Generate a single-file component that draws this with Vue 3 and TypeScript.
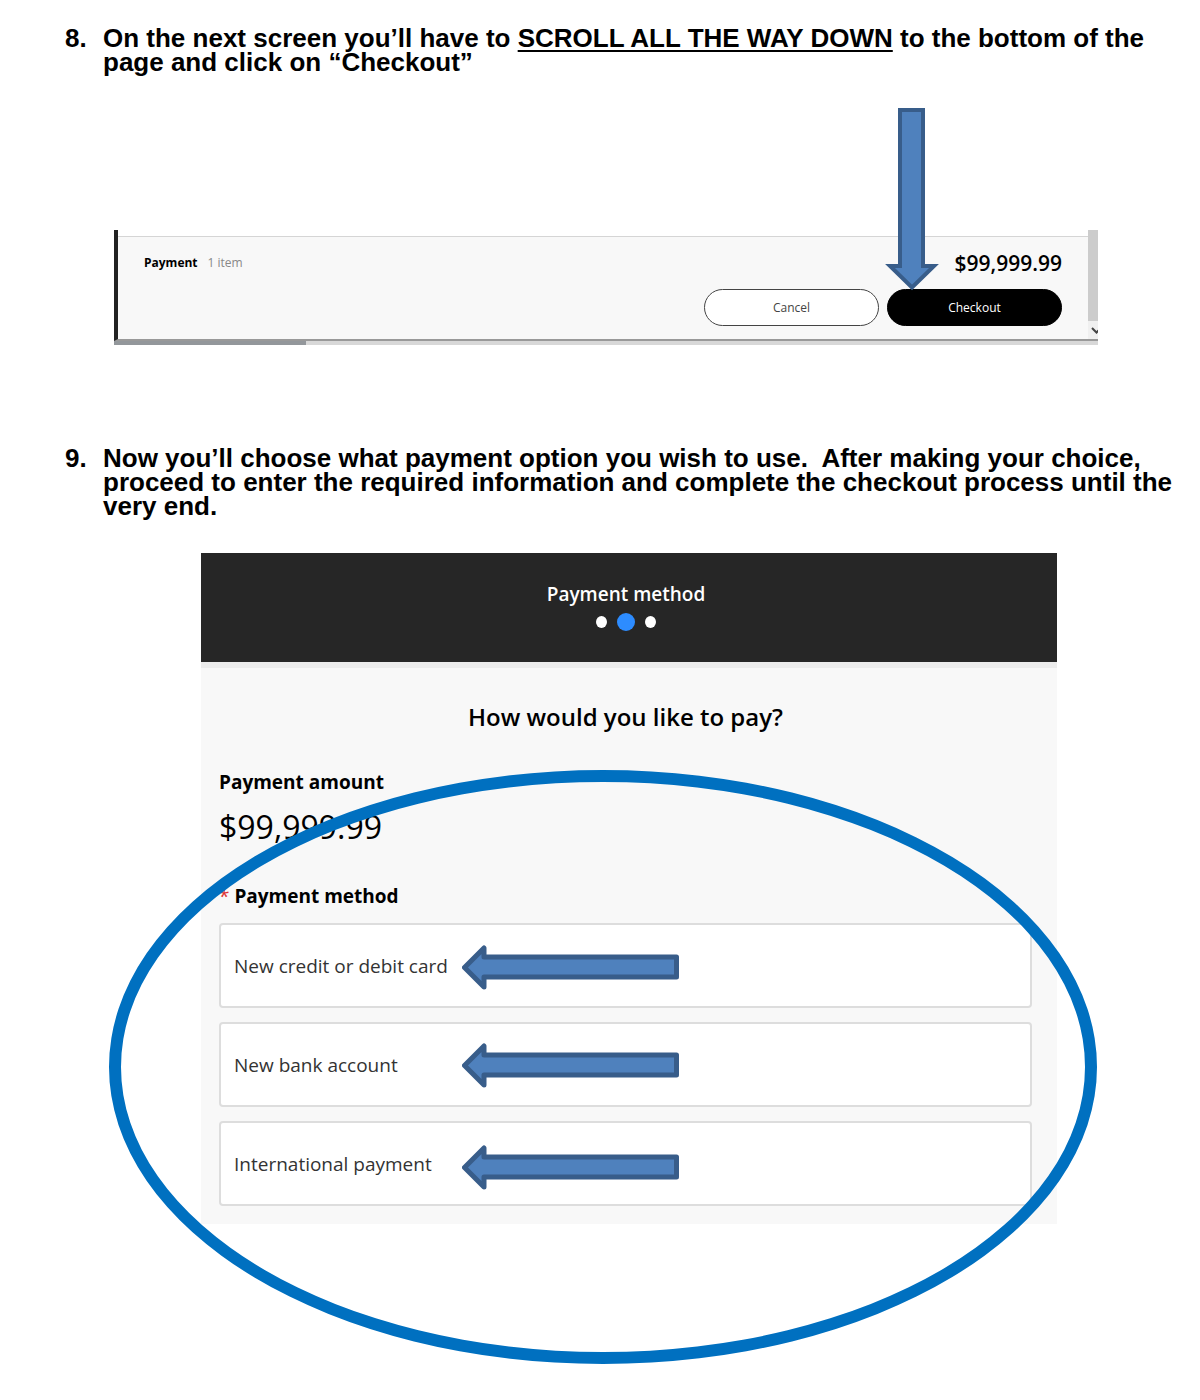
<script setup lang="ts">
interface PaymentOption {
  id: string
  label: string
}

const amount = '$99,999.99'

const options: PaymentOption[] = [
  { id: 'card', label: 'New credit or debit card' },
  { id: 'bank', label: 'New bank account' },
  { id: 'international', label: 'International payment' },
]

// Vertical start of each pointer arrow, measured from the top of the option list
const arrowTops: number[] = [22, 120, 222]
</script>

<template>
  <main class="page">
    <section class="step">
      <span class="number">8.</span>
      <p class="instruction">
        On the next screen you’ll have to <u>SCROLL ALL THE WAY DOWN</u> to the bottom of the page
        and click on “Checkout”
      </p>
    </section>

    <figure class="summary">
      <div class="viewport">
        <div class="bar">
          <div class="row">
            <div class="label"><strong>Payment</strong><span class="count">1 item</span></div>
            <span class="total">{{ amount }}</span>
          </div>
          <div class="actions">
            <button type="button" class="pill">Cancel</button>
            <button type="button" class="pill primary">Checkout</button>
          </div>
        </div>
        <div class="vscroll">
          <div class="vthumb"></div>
          <svg class="chevron" width="10" height="18" viewBox="0 0 10 18" aria-hidden="true">
            <path d="M4 7l4.500 4.500L13 7" fill="none" stroke="#444" stroke-width="2" />
          </svg>
        </div>
      </div>
      <div class="hscroll"><div class="hthumb"></div></div>
      <svg class="down-arrow" width="56" height="184" viewBox="0 0 56 184" aria-hidden="true">
        <path d="M16 3H39V159H50L28 180.500L6 159H16Z" fill="#4f81bd" stroke="#385d8a" stroke-width="4" />
      </svg>
    </figure>

    <section class="step">
      <span class="number">9.</span>
      <p class="instruction">
        Now you’ll choose what payment option you wish to use.&nbsp; After making your choice,
        proceed to enter the required information and complete the checkout process until the very
        end.
      </p>
    </section>

    <figure class="method">
      <header class="method-head">
        <span>Payment method</span>
        <div class="dots">
          <i class="dot"></i>
          <i class="dot current"></i>
          <i class="dot"></i>
        </div>
      </header>
      <div class="method-body">
        <h2>How would you like to pay?</h2>
        <h3>Payment amount</h3>
        <div class="amount">{{ amount }}</div>
        <h3><span class="required">*</span> Payment method</h3>
        <div class="options">
          <button v-for="option in options" :key="option.id" type="button" class="option">
            {{ option.label }}
          </button>
          <svg class="pointers" width="217" height="284" viewBox="0 0 217 284" aria-hidden="true">
            <path
              v-for="top in arrowTops"
              :key="top"
              :transform="`translate(0 ${top})`"
              d="M2.500 22.500L22 3V12H214.500V32H22V42Z"
              fill="#4f81bd"
              stroke="#385d8a"
              stroke-width="5"
              stroke-linejoin="round"
            />
          </svg>
        </div>
      </div>
      <div class="ellipse"></div>
    </figure>
  </main>
</template>

<style>
body {
  margin: 0;
  background: #fff;
}
</style>

<style scoped>
.page {
  display: flow-root;
  color: #000;
  font-family: 'Open Sans', 'Noto Sans', sans-serif;
}

.step {
  display: flex;
  margin: 26px 24px 0 65px;
  font: bold 26px/24px 'Liberation Sans', Arial, sans-serif;
}

.number {
  flex: 0 0 38px;
}

.instruction {
  margin: 0;
}

u {
  text-decoration-thickness: 2px;
  text-underline-offset: 3px;
}

.summary {
  position: relative;
  margin: 156px 102px 0 114px;
}

.viewport {
  display: flex;
  border-left: 4px solid #222;
  border-bottom: 2px solid #999;
  box-sizing: border-box;
}

.bar {
  flex: 1;
  margin-top: 6px;
  padding: 12px 26px 13px;
  border-top: 1px solid #d5d5d5;
  background: #f8f8f8;
}

.row {
  display: flex;
  justify-content: space-between;
  align-items: center;
  height: 28px;
  margin-bottom: 12px;
}

.label {
  display: flex;
  align-items: baseline;
  gap: 10px;
  font-size: 12px;
  line-height: 18px;
}

.count {
  color: #888;
}

.total {
  font-size: 21px;
  font-weight: 600;
}

.actions {
  display: flex;
  justify-content: flex-end;
  gap: 8px;
}

.pill {
  box-sizing: border-box;
  width: 175px;
  height: 37px;
  padding: 0;
  border: 1px solid #444;
  border-radius: 19px;
  background: #fff;
  color: #444;
  font: 12px/18px 'Open Sans', 'Noto Sans', sans-serif;
}

.pill.primary {
  border-color: #000;
  background: #000;
  color: #fff;
}

.vscroll {
  display: flex;
  flex-direction: column;
  width: 10px;
  background: #f0f0f0;
}

.vthumb {
  flex: 1;
  background: #ccc;
}

.chevron {
  display: block;
}

.hscroll {
  height: 4px;
  background: #d8d8d8;
}

.hthumb {
  width: 192px;
  height: 100%;
  background: #93979b;
}

.down-arrow {
  position: absolute;
  top: -123px;
  right: 158px;
}

.summary + .step {
  margin-top: 101px;
}

.method {
  position: relative;
  margin: 35px 143px 173px 201px;
}

.method-head {
  display: flex;
  flex-direction: column;
  align-items: center;
  box-sizing: border-box;
  height: 109px;
  padding: 28px 6px 0 0;
  background: #262626;
  color: #fff;
  font-size: 19px;
  font-weight: 600;
  line-height: 26px;
}

.dots {
  display: flex;
  align-items: center;
  gap: 10px;
  margin-top: 6px;
}

.dot {
  width: 11px;
  height: 12px;
  border-radius: 50%;
  background: #fff;
}

.dot.current {
  width: 18px;
  height: 18px;
  background: #2d8cff;
}

.method-body {
  padding: 32px 25px 18px 18px;
  border-top: 6px solid #ececec;
  background: #f8f8f8;
}

h2 {
  margin: 0 0 34px;
  font-size: 24px;
  font-weight: 600;
  line-height: 34px;
  text-align: center;
}

h3 {
  margin: 0;
  font-size: 19px;
  font-weight: 700;
  line-height: 28px;
}

.amount {
  margin: 9px 0 33px;
  font-size: 32px;
  line-height: 44px;
}

.required {
  color: #d33;
  font-weight: 400;
}

.options {
  position: relative;
  display: flex;
  flex-direction: column;
  gap: 14px;
  margin-top: 13px;
}

.option {
  box-sizing: border-box;
  height: 85px;
  padding: 0 13px;
  border: 2px solid #ddd;
  border-radius: 4px;
  background: #fff;
  color: #333;
  font: 19px/26px 'Open Sans', 'Noto Sans', sans-serif;
  text-align: left;
}

.pointers {
  position: absolute;
  top: 0;
  left: 243px;
}

.ellipse {
  position: absolute;
  top: 217px;
  right: -40px;
  left: -92px;
  box-sizing: border-box;
  height: 594px;
  border: 12px solid #0070c0;
  border-radius: 50%;
  pointer-events: none;
}
</style>
